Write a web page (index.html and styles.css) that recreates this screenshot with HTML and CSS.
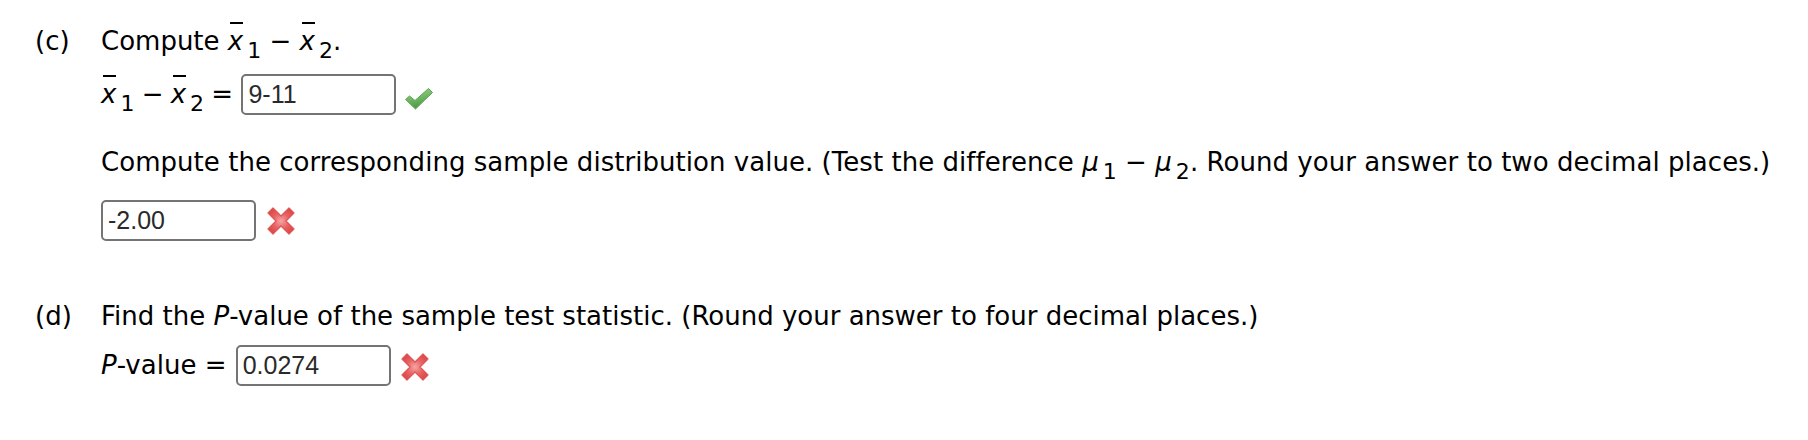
FILE: index.html
```html
<!DOCTYPE html>
<html lang="en">
<head>
<meta charset="utf-8">
<title>Question</title>
<link rel="stylesheet" href="styles.css">
</head>
<body>
<div class="page">
  <div class="part part-c">
    <div class="label">(c)</div>
    <div class="content">
      <div class="line l1">Compute <span class="xbar">x</span><sub>1</sub> − <span class="xbar">x</span><sub>2</sub>.</div>
      <div class="line l2"><span class="xbar">x</span><sub>1</sub> − <span class="xbar">x</span><sub>2</sub> = <span class="answer a-low">9-11</span><svg class="mark check" width="30" height="24" viewBox="0 0 30 24"><defs><linearGradient id="gc" x1="0" y1="0" x2="0.3" y2="1"><stop offset="0" stop-color="#9ad88a"/><stop offset="1" stop-color="#4c9a43"/></linearGradient></defs><path d="M1.5 12.5 L5.5 9 L11 13.5 L24.5 1.5 L28.5 5.5 L11.5 22 Z" fill="url(#gc)" stroke="#5fa554" stroke-width="1" stroke-linejoin="round"/></svg></div>
      <div class="line l3">Compute the corresponding sample distribution value. (Test the difference <i>μ</i><sub>1</sub> − <i>μ</i><sub>2</sub>. Round your answer to two decimal places.)</div>
      <div class="row l4"><span class="answer">-2.00</span><svg class="mark cross" width="28" height="28" viewBox="0 0 28 28"><defs><radialGradient id="gx1" cx="0.5" cy="0.5" r="0.6"><stop offset="0" stop-color="#f6a4a4"/><stop offset="0.5" stop-color="#e86464"/><stop offset="1" stop-color="#d94343"/></radialGradient></defs><path d="M6 1 L14 9 L22 1 L27 6 L19 14 L27 22 L22 27 L14 19 L6 27 L1 22 L9 14 L1 6 Z" fill="url(#gx1)" stroke="#e05656" stroke-width="1.2" stroke-linejoin="round"/></svg></div>
    </div>
  </div>
  <div class="part part-d">
    <div class="label">(d)</div>
    <div class="content">
      <div class="line l5">Find the <i>P</i>-value of the sample test statistic. (Round your answer to four decimal places.)</div>
      <div class="line l6"><i>P</i>-value = <span class="answer a-mid">0.0274</span><svg class="mark cross" width="28" height="28" viewBox="0 0 28 28"><defs><radialGradient id="gx2" cx="0.5" cy="0.5" r="0.6"><stop offset="0" stop-color="#f6a4a4"/><stop offset="0.5" stop-color="#e86464"/><stop offset="1" stop-color="#d94343"/></radialGradient></defs><path d="M6 1 L14 9 L22 1 L27 6 L19 14 L27 22 L22 27 L14 19 L6 27 L1 22 L9 14 L1 6 Z" fill="url(#gx2)" stroke="#e05656" stroke-width="1.2" stroke-linejoin="round"/></svg></div>
    </div>
  </div>
</div>
</body>
</html>
```
FILE: styles.css
```css
html, body {
  margin: 0;
  padding: 0;
  background: #ffffff;
}

.page {
  padding: 26px 0 0 35px;
  font-family: "DejaVu Sans", Verdana, sans-serif;
  font-size: 26px;
  color: #000000;
}

.part {
  display: flex;
}

.part-d {
  margin-top: 60px;
}

.label {
  width: 66px;
  flex: none;
  line-height: 30px;
}

.content {
  flex: 1;
}

.line {
  line-height: 30px;
  white-space: nowrap;
}

.l2 {
  margin-top: 18px;
  word-spacing: -1px;
}

.l3 {
  margin-top: 32px;
  letter-spacing: 0.04px;
}

.l4 {
  margin-top: 23px;
}

.l6 {
  margin-top: 14px;
}

.row {
  display: flex;
  align-items: center;
}

i,
.xbar {
  font-style: italic;
}

.xbar {
  position: relative;
  display: inline-block;
}

.xbar::before {
  content: "";
  position: absolute;
  left: 2px;
  top: -4px;
  width: 13px;
  height: 2px;
  background: #000000;
}

sub {
  font-size: 22px;
  line-height: 0;
  vertical-align: -8px;
  margin-left: 4px;
}

.answer {
  display: inline-block;
  box-sizing: border-box;
  width: 155px;
  height: 41px;
  padding: 0 0 0 5px;
  border: 2px solid #747474;
  border-radius: 5px;
  font-family: "Liberation Sans", Arial, sans-serif;
  font-size: 25px;
  line-height: 37px;
  color: #2a2a2a;
  background: #ffffff;
  letter-spacing: 0;
  word-spacing: 0;
}

.a-low {
  margin-left: 1px;
}

.a-mid {
  margin-left: 1px;
}

.mark {
  display: inline-block;
}

.check {
  margin-left: 8px;
  vertical-align: -8px;
}

.row .cross {
  margin-left: 11px;
}

.line .cross {
  margin-left: 10px;
  vertical-align: -7px;
}
```
